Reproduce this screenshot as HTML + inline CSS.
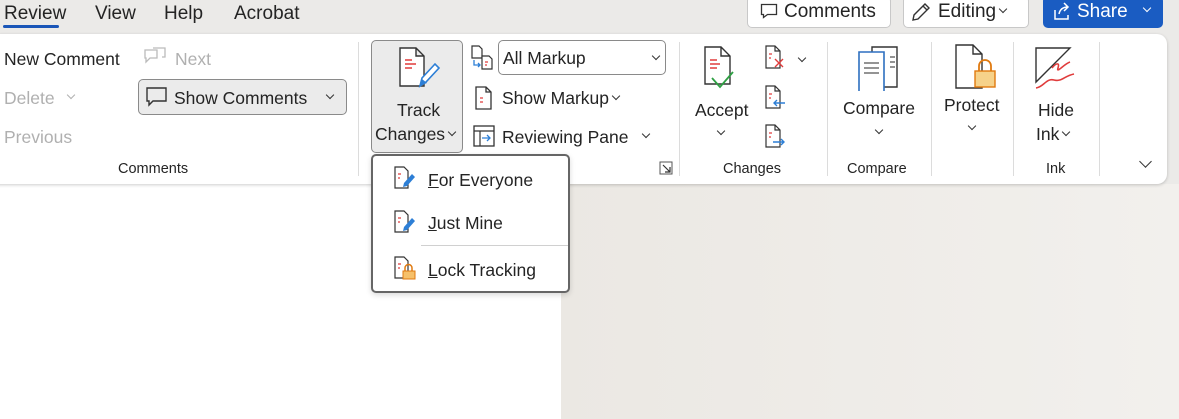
<!DOCTYPE html>
<html><head><meta charset="utf-8"><style>
*{margin:0;padding:0;box-sizing:border-box}
body{width:1179px;height:419px;overflow:hidden;position:relative;background:#ebeae8;font-family:"Liberation Sans",sans-serif;color:#242424}
.a{position:absolute;white-space:nowrap}
.t{font-size:17.5px}
.g{color:#b0b0b0}
.s{font-size:14.5px}
.sep{position:absolute;width:1px;background:#dcdcdc;top:42px;height:134px}
.cv{display:inline-block;width:6px;height:6px;border-right:1.4px solid #333;border-bottom:1.4px solid #333;transform:rotate(45deg);vertical-align:middle;margin-top:-6px;margin-left:4px}
.a.cv{margin:0}
.cg{border-color:#b0b0b0}
.cw{border-color:#fff}
</style></head><body>
<!-- top bar -->
<div class="a t" style="left:4px;top:3px;font-size:19px">Review</div>
<div class="a" style="left:3px;top:25px;width:56px;height:3px;background:#1a56b8;border-radius:2px"></div>
<div class="a t" style="left:95px;top:3px;font-size:19px">View</div>
<div class="a t" style="left:164px;top:3px;font-size:19px">Help</div>
<div class="a t" style="left:234px;top:3px;font-size:19px">Acrobat</div>
<div class="a" style="left:747px;top:-4px;width:144px;height:32px;background:#fff;border:1px solid #c8c8c8;border-radius:5px"></div>
<svg class="a" style="left:760px;top:3px" width="18" height="16"><path d="M1.5 1.5h15v10h-9l-4 3v-3h-2z" fill="none" stroke="#333" stroke-width="1.3"/></svg>
<div class="a t" style="left:784px;top:1px;font-size:19px">Comments</div>
<div class="a" style="left:903px;top:-4px;width:126px;height:32px;background:#fff;border:1px solid #c8c8c8;border-radius:5px"></div>
<svg class="a" style="left:910px;top:1px" width="22" height="22"><path d="M3 19l1-5L15 3l4 4L8 18z M13 5l4 4" fill="none" stroke="#333" stroke-width="1.4"/></svg>
<div class="a t" style="left:938px;top:1px;font-size:19px">Editing<span class="cv"></span></div>
<div class="a" style="left:1043px;top:-4px;width:120px;height:32px;background:#1a5cc2;border-radius:5px"></div>
<svg class="a" style="left:1052px;top:1px" width="20" height="20"><path d="M3 9v9h13v-4 M7 13c1-5 4-7 9-7 M12 2l4 4-4 4" fill="none" stroke="#fff" stroke-width="1.5"/></svg>
<div class="a" style="left:1077px;top:1px;font-size:19px;color:#fff">Share</div>
<div class="a cv cw" style="left:1144px;top:5px"></div>
<!-- page background -->
<div class="a" style="left:0;top:184px;width:561px;height:235px;background:#fff"></div>
<div class="a" style="left:561px;top:184px;width:618px;height:235px;background:linear-gradient(90deg,#ebe8e3,#f2f0ed)"></div>
<!-- ribbon -->
<div class="a" style="left:-10px;top:34px;width:1177px;height:150px;background:#fff;border-radius:10px;box-shadow:0 1px 3px rgba(0,0,0,.2)"></div>
<!-- Comments group -->
<div class="a t" style="left:4px;top:49px">New Comment</div>
<svg class="a" style="left:143px;top:46px" width="24" height="22"><path d="M2 4h12v8H7l-4 4v-4H2z M10 2h12v9h-3" fill="none" stroke="#bbb" stroke-width="1.3"/></svg>
<div class="a t g" style="left:175px;top:49px">Next</div>
<div class="a t g" style="left:4px;top:88px">Delete</div>
<div class="a cv cg" style="left:68px;top:92px"></div>
<div class="a" style="left:138px;top:79px;width:209px;height:36px;background:#ebebeb;border:1px solid #8a8a8a;border-radius:5px"></div>
<svg class="a" style="left:145px;top:86px" width="24" height="22"><path d="M2 2h19v13H8l-4 4v-4H2z" fill="none" stroke="#333" stroke-width="1.4"/></svg>
<div class="a t" style="left:174px;top:88px">Show Comments</div>
<div class="a cv" style="left:327px;top:92px"></div>
<div class="a t g" style="left:4px;top:127px">Previous</div>
<div class="a s" style="left:118px;top:161px">Comments</div>
<div class="sep" style="left:358px"></div>
<!-- Tracking -->
<div class="a" style="left:371px;top:40px;width:92px;height:113px;background:#ebebeb;border:1px solid #8a8a8a;border-radius:5px"></div>
<svg class="a" style="left:396px;top:46px" width="46" height="46"><path d="M4 2h16l8 8v30H4z M20 2v8h8" fill="#fff" stroke="#333" stroke-width="1.4"/><path d="M9 14h7M9 18h11M9 22h7" stroke="#e03c3c" stroke-width="1.6"/><path d="M24 40l2-8 13-14 4 4-13 14z" fill="#fff" stroke="#2d7fd6" stroke-width="1.6"/><path d="M24 40l2-7 5 4z" fill="#2d7fd6"/></svg>
<div class="a t" style="left:397px;top:100px">Track</div>
<div class="a t" style="left:375px;top:124px">Changes<span class="cv"></span></div>
<svg class="a" style="left:470px;top:44px" width="26" height="28"><path d="M2 2h7l3 3v9H2z" fill="#fff" stroke="#333" stroke-width="1.2"/><path d="M12 12h7l3 3v10H12z" fill="#fff" stroke="#333" stroke-width="1.2"/><path d="M4 16v5h6m-2-2l2 2-2 2" fill="none" stroke="#2d7fd6" stroke-width="1.3"/><path d="M15 18h3M15 21h2" stroke="#e03c3c" stroke-width="1.2"/></svg>
<div class="a" style="left:498px;top:40px;width:168px;height:35px;border:1px solid #8a8a8a;border-radius:5px;background:#fff"></div>
<div class="a t" style="left:503px;top:48px">All Markup</div>
<div class="a cv" style="left:653px;top:53px"></div>
<svg class="a" style="left:473px;top:85px" width="22" height="26"><path d="M3 2h10l5 5v17H3z M13 2v5h5" fill="#fff" stroke="#333" stroke-width="1.3"/><path d="M7 13h3M7 17h3" stroke="#e03c3c" stroke-width="1.3"/></svg>
<div class="a t" style="left:502px;top:88px">Show Markup<span class="cv"></span></div>
<svg class="a" style="left:472px;top:124px" width="24" height="24"><rect x="2" y="2" width="20" height="20" fill="#fff" stroke="#333" stroke-width="1.3"/><path d="M2 7h20M8 7v15" stroke="#333" stroke-width="1.2"/><path d="M10 14h8m-3-3l3 3-3 3" fill="none" stroke="#2d7fd6" stroke-width="1.3"/></svg>
<div class="a t" style="left:502px;top:127px">Reviewing Pane</div>
<div class="a cv" style="left:643px;top:131px"></div>
<svg class="a" style="left:659px;top:161px" width="14" height="14"><path d="M1 1h12v12H1z" fill="none" stroke="#555" stroke-width="1"/><path d="M4 4l7 7M6 11h5V6" fill="none" stroke="#333" stroke-width="1.2"/></svg>
<div class="sep" style="left:679px"></div>
<!-- Changes -->
<svg class="a" style="left:702px;top:44px" width="46" height="50"><path d="M3 3h16l9 9v28H3z M19 3v9h9" fill="#fff" stroke="#333" stroke-width="1.4"/><path d="M8 16h7M8 20h10M8 24h7" stroke="#e03c3c" stroke-width="1.6"/><path d="M10 34l8 9 13-15" fill="none" stroke="#2ea043" stroke-width="1.8"/></svg>
<div class="a t" style="left:695px;top:100px">Accept</div>
<div class="a cv" style="left:718px;top:128px"></div>
<svg class="a" style="left:764px;top:44px" width="24" height="28"><path d="M2 2h9l5 5v17H2z M11 2v5h5" fill="#fff" stroke="#333" stroke-width="1.2"/><path d="M5 10h3M5 14h2" stroke="#e03c3c" stroke-width="1.2"/><path d="M11 15l8 8M19 15l-8 8" stroke="#e03c3c" stroke-width="1.4"/></svg>
<div class="a cv" style="left:799px;top:55px"></div>
<svg class="a" style="left:764px;top:84px" width="24" height="28"><path d="M2 2h9l5 5v17H2z M11 2v5h5" fill="#fff" stroke="#333" stroke-width="1.2"/><path d="M5 10h3M5 14h2" stroke="#e03c3c" stroke-width="1.2"/><path d="M21 19H10m3-3l-3 3 3 3" fill="none" stroke="#2d7fd6" stroke-width="1.4"/></svg>
<svg class="a" style="left:764px;top:123px" width="24" height="28"><path d="M2 2h9l5 5v17H2z M11 2v5h5" fill="#fff" stroke="#333" stroke-width="1.2"/><path d="M5 10h3M5 14h2" stroke="#e03c3c" stroke-width="1.2"/><path d="M9 19h11m-3-3l3 3-3 3" fill="none" stroke="#2d7fd6" stroke-width="1.4"/></svg>
<div class="a s" style="left:723px;top:161px">Changes</div>
<div class="sep" style="left:827px"></div>
<!-- Compare -->
<svg class="a" style="left:857px;top:45px" width="48" height="46"><path d="M15 2h25v40H15z" fill="#fff" stroke="#333" stroke-width="1.4"/><path d="M33 12h5M33 17h5M33 22h5" stroke="#555" stroke-width="1.3"/><path d="M2 7h25v40H2z" fill="#fff" stroke="#2d6fc0" stroke-width="1.6"/><path d="M7 18h15M7 23h15M7 28h15" stroke="#555" stroke-width="1.3"/></svg>
<div class="a t" style="left:843px;top:98px">Compare</div>
<div class="a cv" style="left:876px;top:127px"></div>
<div class="a s" style="left:847px;top:161px">Compare</div>
<div class="sep" style="left:931px"></div>
<!-- Protect -->
<svg class="a" style="left:952px;top:43px" width="48" height="48"><path d="M4 2h17l9 9v34H4z M21 2v9h9" fill="#fff" stroke="#333" stroke-width="1.4"/><path d="M27 28v-5a6 6 0 0 1 12 0v5" fill="none" stroke="#e07a10" stroke-width="1.8"/><rect x="23" y="28" width="20" height="16" fill="#f6d28a" stroke="#e07a10" stroke-width="1.4"/></svg>
<div class="a t" style="left:944px;top:95px">Protect</div>
<div class="a cv" style="left:969px;top:123px"></div>
<div class="sep" style="left:1013px"></div>
<!-- Ink -->
<svg class="a" style="left:1034px;top:46px" width="46" height="46"><path d="M2 2h34L2 36z" fill="#fff" stroke="#333" stroke-width="1.4"/><path d="M18 22c4-5 8-6 6 0s6-4 12-6 M2 42c8-1 10-10 18-8s10-4 20-6" fill="none" stroke="#e03c3c" stroke-width="1.6"/></svg>
<div class="a t" style="left:1038px;top:100px">Hide</div>
<div class="a t" style="left:1036px;top:124px">Ink<span class="cv"></span></div>
<div class="a s" style="left:1046px;top:161px">Ink</div>
<div class="sep" style="left:1099px"></div>
<div class="a cv" style="left:1141px;top:157px;width:9px;height:9px"></div>
<!-- dropdown menu -->
<div class="a" style="left:371px;top:154px;width:199px;height:139px;background:#fff;border:2px solid #666;border-radius:5px;box-shadow:0 2px 6px rgba(0,0,0,.15)"></div>
<svg class="a" style="left:393px;top:165px" width="24" height="26"><path d="M2 2h9l4 4v17H2z" fill="#fff" stroke="#333" stroke-width="1.2"/><path d="M5 9h3M5 13h2" stroke="#e03c3c" stroke-width="1.2"/><path d="M10 22l1-4 8-9 3 3-8 9z" fill="#2d7fd6"/></svg>
<div class="a t" style="left:428px;top:170px"><u>F</u>or Everyone</div>
<svg class="a" style="left:393px;top:209px" width="24" height="26"><path d="M2 2h9l4 4v17H2z" fill="#fff" stroke="#333" stroke-width="1.2"/><path d="M5 9h3M5 13h2" stroke="#e03c3c" stroke-width="1.2"/><path d="M10 22l1-4 8-9 3 3-8 9z" fill="#2d7fd6"/></svg>
<div class="a t" style="left:428px;top:213px"><u>J</u>ust Mine</div>
<div class="a" style="left:421px;top:245px;width:147px;height:1px;background:#d0d0d0"></div>
<svg class="a" style="left:393px;top:255px" width="26" height="26"><path d="M2 2h9l4 4v17H2z" fill="#fff" stroke="#333" stroke-width="1.2"/><path d="M5 9h3M5 13h2" stroke="#e03c3c" stroke-width="1.2"/><path d="M12 16v-3a3.5 3.5 0 0 1 7 0v3" fill="none" stroke="#e07a10" stroke-width="1.5"/><rect x="10" y="16" width="12" height="8" fill="#f6c06a" stroke="#e07a10" stroke-width="1"/></svg>
<div class="a t" style="left:428px;top:260px"><u>L</u>ock Tracking</div>
</body></html>
